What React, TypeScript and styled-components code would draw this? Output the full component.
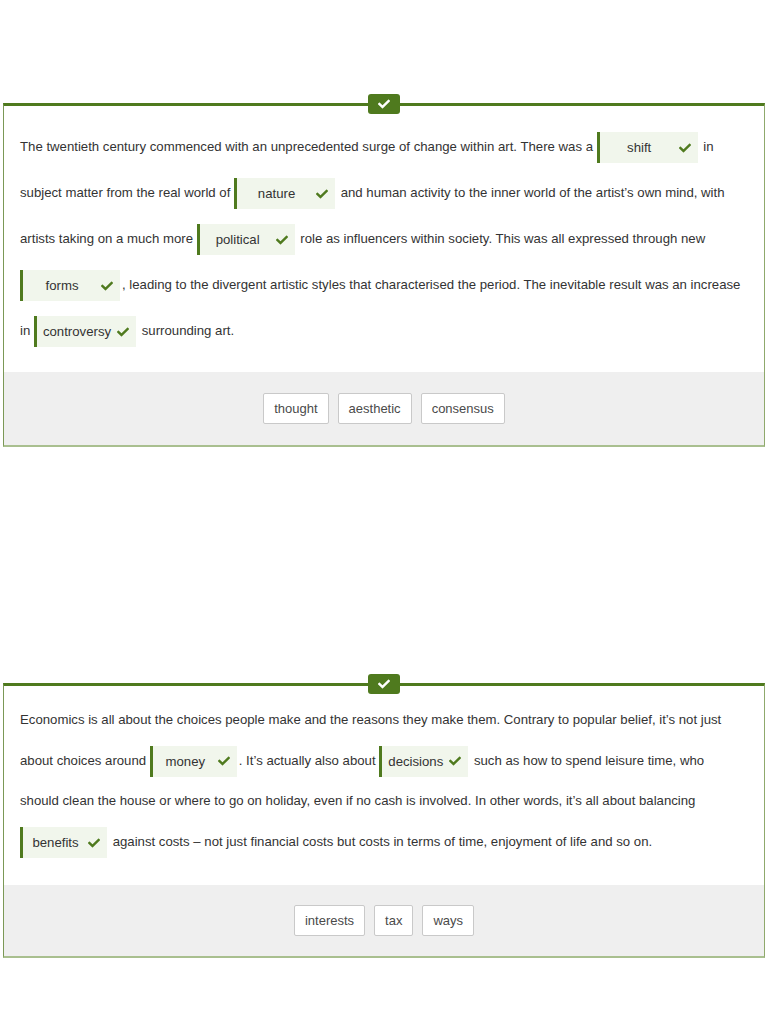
import React from "react";
import styled, { createGlobalStyle } from "styled-components";
import { FaCheck } from "react-icons/fa";

const GREEN = "#4f7a1e";

const GlobalStyle = createGlobalStyle`
  body {
    margin: 0;
    background: #ffffff;
    font-family: "Liberation Sans", Arial, Helvetica, sans-serif;
    color: #333333;
  }
`;

const Page = styled.div`
  display: flex;
  flex-direction: column;
  padding: 103px 3px 0 3px;
  gap: 236px;
`;

const Panel = styled.section`
  position: relative;
  border-top: 3px solid ${GREEN};
  border-left: 1px solid #7b9856;
  border-right: 1px solid #8fa96c;
  border-bottom: 2px solid #a9bf8f;
`;

const Badge = styled.div`
  position: absolute;
  top: -12px;
  left: 364px;
  width: 32px;
  height: 20px;
  border-radius: 3px;
  background: ${GREEN};
  color: #ffffff;
  display: flex;
  align-items: center;
  justify-content: center;
`;

const Passage = styled.p<{ $lineHeight: number; $padTop: number; $padBottom: number }>`
  margin: 0;
  padding: ${(p) => p.$padTop}px 19px ${(p) => p.$padBottom}px 16px;
  font-size: 13.2px;
  line-height: ${(p) => p.$lineHeight}px;
  color: #333333;
`;

const Blank = styled.span<{ $minWidth: number }>`
  display: inline-flex;
  align-items: center;
  vertical-align: middle;
  height: 31px;
  min-width: ${(p) => p.$minWidth}px;
  box-sizing: border-box;
  margin: 0 2px 0 0;
  padding: 0 7px 0 6px;
  gap: 6px;
  border-left: 3px solid ${GREEN};
  background: #f1f6ec;
  line-height: 31px;
`;

const BlankWord = styled.span`
  flex: 1;
  text-align: center;
  color: #333333;
`;

const Tick = styled(FaCheck)`
  color: ${GREEN};
  width: 12px;
  height: 12px;
  flex: none;
`;

const Tray = styled.div<{ $height: number }>`
  display: flex;
  justify-content: center;
  align-items: center;
  gap: 9px;
  height: ${(p) => p.$height}px;
  background: #efefef;
`;

const Chip = styled.div`
  height: 31px;
  box-sizing: border-box;
  padding: 0 10px;
  display: flex;
  align-items: center;
  background: #ffffff;
  border: 1px solid #c9c9c9;
  border-radius: 2px;
  font-size: 13px;
  color: #4a4a4a;
`;

const Filled = ({ word, min }: { word: string; min: number }) => (
  <Blank $minWidth={min}>
    <BlankWord>{word}</BlankWord>
    <Tick />
  </Blank>
);

export default function App() {
  return (
    <>
      <GlobalStyle />
      <Page>
        <Panel>
          <Badge>
            <FaCheck size={12} />
          </Badge>
          <Passage $lineHeight={46} $padTop={18} $padBottom={18}>
            The twentieth century commenced with an unprecedented surge of change within art. There was a{" "}
            <Filled word="shift" min={101} /> in subject matter from the real world of{" "}
            <Filled word="nature" min={101} /> and human activity to the inner world of the artist’s own mind, with
            artists taking on a much more <Filled word="political" min={98} /> role as influencers within society. This
            was all expressed through new <Filled word="forms" min={100} />, leading to the divergent artistic styles
            that characterised the period. The inevitable result was an increase in{" "}
            <Filled word="controversy" min={99} /> surrounding art.
          </Passage>
          <Tray $height={73}>
            <Chip>thought</Chip>
            <Chip>aesthetic</Chip>
            <Chip>consensus</Chip>
          </Tray>
        </Panel>
        <Panel>
          <Badge>
            <FaCheck size={12} />
          </Badge>
          <Passage $lineHeight={40.7} $padTop={14} $padBottom={22}>
            Economics is all about the choices people make and the reasons they make them. Contrary to popular belief,
            it’s not just about choices around <Filled word="money" min={87} />. It’s actually also about{" "}
            <Filled word="decisions" min={86} /> such as how to spend leisure time, who should clean the house or where
            to go on holiday, even if no cash is involved. In other words, it’s all about balancing{" "}
            <Filled word="benefits" min={87} /> against costs – not just financial costs but costs in terms of time,
            enjoyment of life and so on.
          </Passage>
          <Tray $height={71}>
            <Chip>interests</Chip>
            <Chip>tax</Chip>
            <Chip>ways</Chip>
          </Tray>
        </Panel>
      </Page>
    </>
  );
}
